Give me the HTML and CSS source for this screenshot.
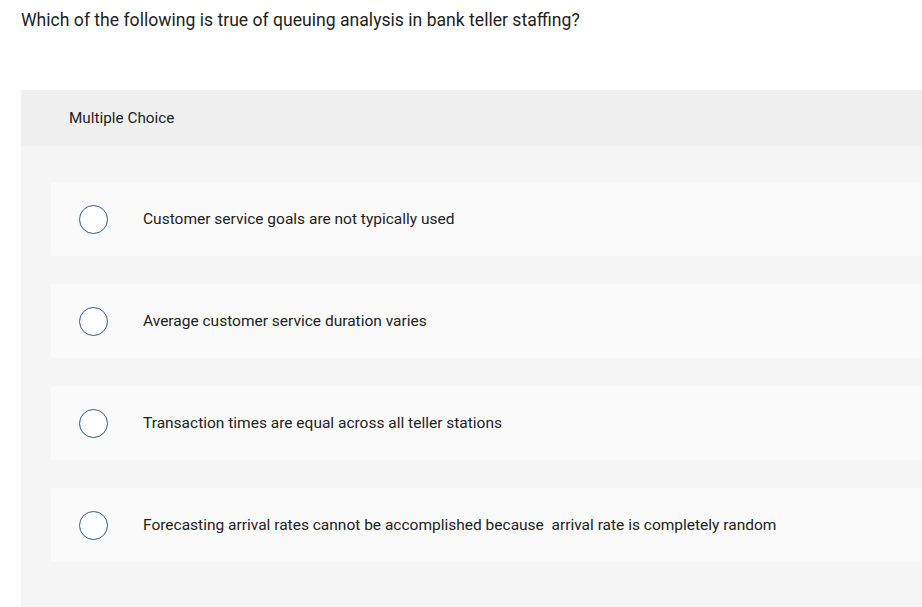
FILE: index.html
```html
<!DOCTYPE html>
<html>
<head>
<meta charset="utf-8">
<link rel="stylesheet" href="styles.css">
</head>
<body>
<div class="page">
  <p class="question">Which of the following is true of queuing analysis in bank teller staffing?</p>
  <div class="panel">
    <div class="panel-head">Multiple Choice</div>
    <div class="panel-body">
      <label class="option"><span class="radio"></span><span class="opt-text">Customer service goals are not typically used</span></label>
      <label class="option"><span class="radio"></span><span class="opt-text">Average customer service duration varies</span></label>
      <label class="option"><span class="radio"></span><span class="opt-text">Transaction times are equal across all teller stations</span></label>
      <label class="option"><span class="radio"></span><span class="opt-text">Forecasting arrival rates cannot be accomplished because&nbsp; arrival rate is completely random</span></label>
    </div>
  </div>
</div>
</body>
</html>
```
FILE: styles.css
```css
html, body {
  margin: 0;
  padding: 0;
  background: #fff;
  overflow: hidden;
}
body {
  font-family: "Roboto", "Liberation Sans", sans-serif;
  color: #222;
  width: 922px;
  height: 607px;
}
.page {
  padding: 9px 0 0 21px;
}
.question {
  margin: 0;
  font-size: 17.6px;
  line-height: 22px;
  color: #222;
}
.panel {
  margin-top: 59px;
  width: 940px;
  background: #f5f5f5;
}
.panel-head {
  background: #f0f0f0;
  height: 56px;
  display: flex;
  align-items: center;
  padding-left: 48px;
  font-size: 15.3px;
  color: #222;
}
.panel-body {
  padding: 36px 0 60px 30px;
  display: flex;
  flex-direction: column;
  gap: 28px;
}
.option {
  background: #fafafa;
  border-radius: 3px;
  height: 74px;
  display: flex;
  align-items: center;
  padding-left: 28px;
}
.radio {
  width: 27px;
  height: 27px;
  border: 1.5px solid #2e5c8a;
  border-radius: 50%;
  background: #fff;
  flex: none;
}
.opt-text {
  margin-left: 35px;
  font-size: 15.5px;
  color: #222;
}
```
